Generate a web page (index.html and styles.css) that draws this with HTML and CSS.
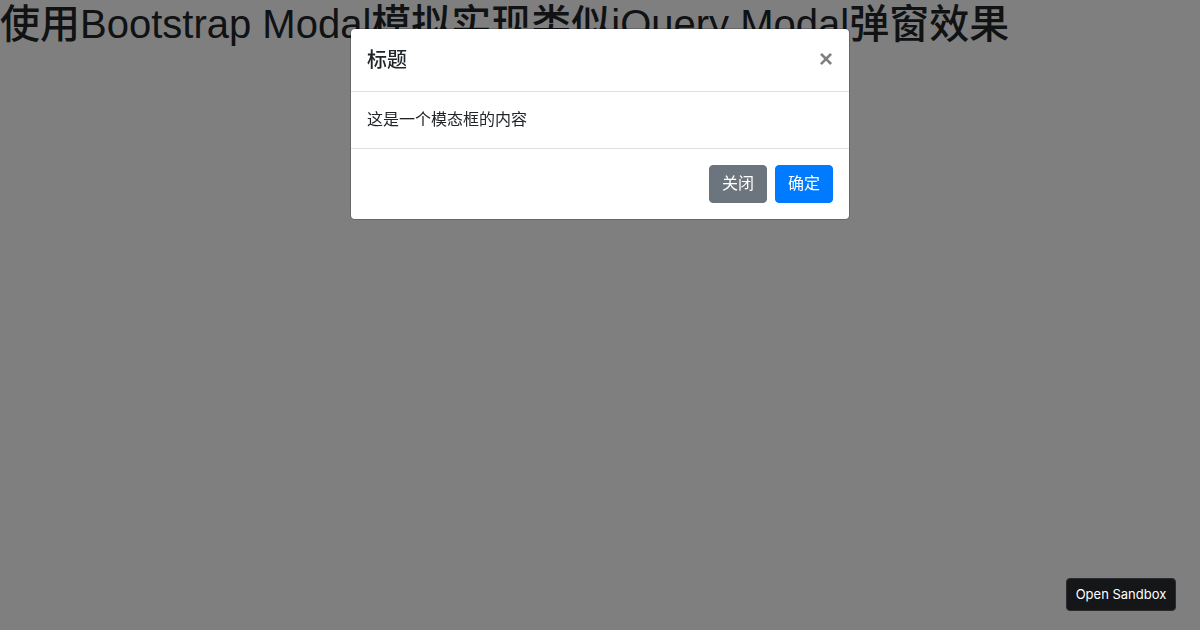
FILE: index.html
```html
<!DOCTYPE html>
<html lang="zh-CN">
<head>
<meta charset="utf-8">
<title>Bootstrap Modal</title>
<link rel="stylesheet" href="styles.css">
</head>
<body>
<h1 class="page-title">使用Bootstrap Modal模拟实现类似jQuery Modal弹窗效果</h1>

<div class="backdrop"></div>

<div class="modal-layer">
  <div class="modal-dialog">
    <div class="modal-content">
      <div class="modal-header">
        <h5 class="modal-title">标题</h5>
        <button class="close" type="button" aria-label="Close">×</button>
      </div>
      <div class="modal-body">
        <p class="modal-text">这是一个模态框的内容</p>
      </div>
      <div class="modal-footer">
        <button class="btn btn-secondary" type="button">关闭</button>
        <button class="btn btn-primary" type="button">确定</button>
      </div>
    </div>
  </div>
</div>

<a class="sandbox-btn" href="#">Open Sandbox</a>
</body>
</html>
```

FILE: styles.css
```css
* {
  box-sizing: border-box;
}

html, body {
  margin: 0;
  padding: 0;
}

body {
  font-family: "Liberation Sans", Arial, "Noto Sans CJK SC", sans-serif;
  font-size: 16px;
  line-height: 1.5;
  color: #212529;
  background: #fff;
  width: 1200px;
  height: 630px;
  overflow: hidden;
}

.page-title {
  margin: 0 0 8px 0;
  font-size: 40px;
  font-weight: 500;
  line-height: 1.2;
}

.backdrop {
  position: fixed;
  inset: 0;
  background: #000;
  opacity: 0.5;
  z-index: 10;
}

.modal-layer {
  position: fixed;
  inset: 0;
  z-index: 20;
}

.modal-dialog {
  width: 500px;
  margin: 28px auto;
}

.modal-content {
  display: flex;
  flex-direction: column;
  background: #fff;
  border: 1px solid rgba(0, 0, 0, 0.2);
  border-radius: 4.8px;
  background-clip: padding-box;
}

.modal-header {
  display: flex;
  align-items: flex-start;
  justify-content: space-between;
  padding: 16px;
  border-bottom: 1px solid #dee2e6;
}

.modal-title {
  margin: 0;
  font-size: 20px;
  font-weight: 500;
  line-height: 1.5;
}

.close {
  margin: -16px -16px -16px auto;
  padding: 18px 16px 14px;
  background: transparent;
  border: 0;
  font-family: "Liberation Sans", Arial, sans-serif;
  font-size: 24px;
  font-weight: 700;
  line-height: 1;
  color: #000;
  opacity: 0.5;
  text-shadow: 0 1px 0 #fff;
  cursor: pointer;
}

.modal-body {
  padding: 16px;
}

.modal-text {
  margin: 0;
}

.modal-footer {
  display: flex;
  align-items: center;
  justify-content: flex-end;
  padding: 12px;
  border-top: 1px solid #dee2e6;
}

.btn {
  margin: 4px;
  display: inline-block;
  font-family: inherit;
  font-size: 16px;
  font-weight: 400;
  line-height: 1.5;
  padding: 6px 12px;
  border: 1px solid transparent;
  border-radius: 4px;
  color: #fff;
  cursor: pointer;
}

.btn-secondary {
  background: #6c757d;
  border-color: #6c757d;
}

.btn-primary {
  background: #007bff;
  border-color: #007bff;
}

.sandbox-btn {
  position: fixed;
  right: 24px;
  bottom: 19px;
  z-index: 30;
  display: flex;
  align-items: center;
  justify-content: center;
  width: 110px;
  height: 33px;
  background: #151618;
  border: 1px solid #2a2b2e;
  border-radius: 4px;
  color: #fff;
  font-family: Inter, "Liberation Sans", sans-serif;
  font-size: 13px;
  text-decoration: none;
}
```
